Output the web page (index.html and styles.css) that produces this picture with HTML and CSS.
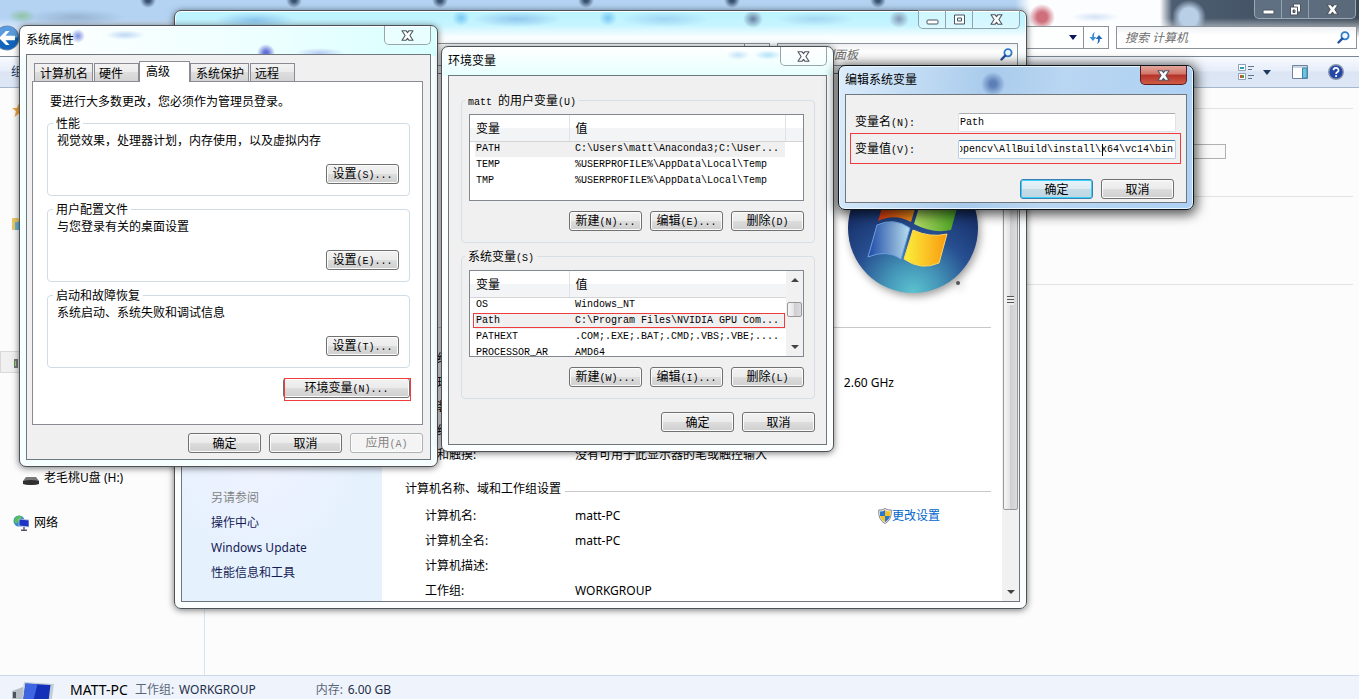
FILE: index.html
```html
<!DOCTYPE html>
<html lang="zh-CN">
<head>
  <meta charset="UTF-8">
  <meta name="viewport" content="width=device-width, initial-scale=1.0">
  <title>环境变量</title>
  <link rel="stylesheet" href="styles.css">
</head>
<body>
  <!-- Shared icons -->
  <svg class="defs" aria-hidden="true">
    <symbol id="i-close" viewBox="0 0 13 11">
      <path d="M1 .7h4l1.500 2L8 .7h4L8.900 5.500L12 10.300H8l-1.500-2L5 10.300H1l3.100-4.800z" fill="#fff" stroke="#4d5560" stroke-width="1.100" stroke-linejoin="round"/>
    </symbol>
    <symbol id="i-min" viewBox="0 0 13 11">
      <rect x="1" y="6" width="11" height="4" rx="1" fill="#fff" stroke="#4d5560"/>
    </symbol>
    <symbol id="i-max" viewBox="0 0 13 11">
      <path d="M1.500 1h10v9h-10zM4.500 4v3h4V4z" fill="#fff" fill-rule="evenodd" stroke="#4d5560"/>
    </symbol>
    <symbol id="i-restore" viewBox="0 0 13 13">
      <path d="M4.500 1h7v8h-7z" fill="#fff" stroke="#4d5560"/>
      <path d="M1.500 4h7v8h-7zM4 7v2.500h2V7z" fill="#fff" fill-rule="evenodd" stroke="#4d5560"/>
    </symbol>
    <symbol id="i-search" viewBox="0 0 13 13">
      <circle cx="8" cy="4.800" r="3.600" fill="#eef8ff" stroke="#2f7cc8" stroke-width="1.800"/>
      <path d="M5.200 7.700L1.500 11.500" stroke="#24539f" stroke-width="2.400" stroke-linecap="round"/>
    </symbol>
    <symbol id="i-refresh" viewBox="0 0 16 14">
      <path d="M7 1C4.500 2 4 4 4.200 6H1.500L5 10L8.300 6H6C6 4 6 2.500 7 1z" fill="#3a8fd6"/>
      <path d="M9 13c2.500-1 3-3 2.800-5h2.700L11 4L7.700 8H10c0 2 0 3.500-1 5z" fill="#2468b8"/>
    </symbol>
  </svg>

  <!-- Explorer window behind everything -->
  <div class="explorer">
    <div class="explorer-glass">
      <button class="back" aria-label="后退">
        <svg viewBox="0 0 26 26"><circle cx="13" cy="13" r="12.500" fill="#6f8cab"/><circle cx="13" cy="13" r="11.500" fill="#1264bd"/><path d="M2 12a11 11 0 0 1 22 0c-6 3-16 3-22 0z" fill="#5b9bdd"/><path d="M5 13l7-7h3.500L11.500 10.800H21v4.400h-9.500l4 4.800H12z" fill="#fff"/></svg>
      </button>
      <div class="address">
        <span class="arrow"></span>
        <button class="refresh" aria-label="刷新"><svg><use href="#i-refresh"/></svg></button>
      </div>
      <label class="search">
        <input type="text" placeholder="搜索 计算机" aria-label="搜索 计算机">
        <svg><use href="#i-search"/></svg>
      </label>
      <div class="controls controls-dark">
        <button aria-label="最小化"><svg><use href="#i-min"/></svg></button>
        <button aria-label="还原"><svg class="tall"><use href="#i-restore"/></svg></button>
        <button class="wide" aria-label="关闭"><svg><use href="#i-close"/></svg></button>
      </div>
    </div>
    <div class="toolbar">
      <span class="organize">组织</span>
      <button aria-label="更改视图">
        <svg viewBox="0 0 16 16"><path d="M.5.500h7v6h-7zM.5 9.500h7v6h-7z" fill="#fff" stroke="#8fa0b5"/><path d="M2 3h4v2H2z" fill="#2f9bb5"/><path d="M2 11h2v3H2z" fill="#d24b35"/><path d="M4 11h2v3H4z" fill="#4fa537"/><path d="M10 2.500h6M10 5.500h4M10 11.500h6M10 14.500h4" stroke="#61748d"/></svg>
      </button>
      <span class="arrow arrow-tool"></span>
      <button aria-label="预览窗格">
        <svg viewBox="0 0 16 16"><path d="M.5 1.500h15v13H.5z" fill="#fff" stroke="#6f839c"/><path d="M1 2h14v2H1z" fill="#c8d6e6"/><path d="M10.500 4h4.500v10h-4.500z" fill="#6ec3e0" stroke="#3d86a8"/></svg>
      </button>
      <button aria-label="帮助" class="help">
        <svg viewBox="0 0 16 16"><circle cx="8" cy="8" r="7.300" fill="#2346a8" stroke="#8d99ad" stroke-width="1.400"/><path d="M5.500 6.200a2.500 2.300 0 1 1 3.600 2.100c-.8.500-1 .9-1 1.600" fill="none" stroke="#fff" stroke-width="1.700"/><circle cx="8.100" cy="12" r="1.100" fill="#fff"/></svg>
      </button>
    </div>
    <div class="explorer-body">
      <div class="nav">
        <svg class="nav-star" viewBox="0 0 14 14"><path d="M7 0l2 5h5l-4 3.200L11.500 14L7 10.500L2.500 14L4 8.200L0 5h5z" fill="#f0a63c"/></svg>
        <svg class="nav-lib" viewBox="0 0 14 14"><path d="M0 1h6l1 2h6v10H0z" fill="#ecc964"/><path d="M3 5h10v8H3z" fill="#69b4dc"/></svg>
        <div class="nav-selected"><svg viewBox="0 0 10 12"><path d="M0 2h4v9H0z" fill="#777"/><path d="M1 4h1v5H1z" fill="#8fdc5b"/></svg></div>
        <div class="nav-item nav-drive">
          <svg viewBox="0 0 16 8"><path d="M3 0h10l3 4v3q-8 2-16 0V4z" fill="#777"/><path d="M0 4q8-2 16 0v3q-8 2-16 0z" fill="#303030"/></svg>
          <span>老毛桃U盘 (H:)</span>
        </div>
        <div class="nav-item nav-network">
          <svg viewBox="0 0 16 16"><circle cx="6" cy="6" r="5.500" fill="#2c86d6"/><path d="M2 3q4-4 7-1L6 6L3 9Q0 7 2 3z" fill="#55c05a"/><path d="M6 4l10 1v7l-10-1z" fill="#1c35c4" stroke="#c5cfdd" stroke-width=".8"/><path d="M11 12v3M8 15.300h6" stroke="#556" stroke-width="1.400"/></svg>
          <span>网络</span>
        </div>
      </div>
      <div class="drives">
        <div class="drive-group"><div class="usage"></div></div>
        <div class="drive-group"></div>
        <div class="drive-group"></div>
      </div>
    </div>
    <div class="status">
      <svg viewBox="0 0 44 34"><path d="M0 9l11-4v24H0z" fill="#b8bec6"/><path d="M1 10h3v6H1z" fill="#4a5560"/><path d="M12 0l30 2-4 27-29-4z" fill="#c3cdd8"/><path d="M13.500 1.500l25 1.500-3 24-25-3z" fill="#1430b8"/><path d="M13.500 1.500l12 .8-6 23-9-1.300z" fill="#3f66e0"/></svg>
      <span class="status-name">MATT-PC</span>
      <span class="status-key">工作组:</span><span class="status-value">WORKGROUP</span>
      <span class="status-key status-memory">内存:</span><span class="status-value">6.00 GB</span>
    </div>
  </div>

  <!-- Control panel: system -->
  <div class="window system">
    <div class="controls">
      <button aria-label="最小化"><svg><use href="#i-min"/></svg></button>
      <button aria-label="最大化"><svg><use href="#i-max"/></svg></button>
      <button class="wide" aria-label="关闭"><svg><use href="#i-close"/></svg></button>
    </div>
    <div class="system-bar">
      <div class="address"><button class="refresh" aria-label="刷新"></button></div>
      <label class="search">
        <input type="text" placeholder="搜索控制面板" aria-label="搜索控制面板">
        <svg><use href="#i-search"/></svg>
      </label>
    </div>
    <div class="client system-client">
      <div class="see-also">
        <span>另请参阅</span>
        <a href="#">操作中心</a>
        <a href="#">Windows Update</a>
        <a href="#">性能信息和工具</a>
      </div>
      <div class="system-main">
        <div class="hero">
          <svg class="orb" viewBox="0 0 132 132">
            <defs>
              <radialGradient id="orb" cx="50%" cy="100%" r="85%">
                <stop offset="0" stop-color="#5cc3d0"/><stop offset=".25" stop-color="#4496b8"/><stop offset=".55" stop-color="#274f91"/><stop offset="1" stop-color="#12265c"/>
              </radialGradient>
              <linearGradient id="red" x1="0" x2="1"><stop offset="0" stop-color="#e3380f"/><stop offset="1" stop-color="#f4a51c"/></linearGradient>
              <linearGradient id="green" x1="0" x2="1"><stop offset="0" stop-color="#b3dc66"/><stop offset="1" stop-color="#3f9a1c"/></linearGradient>
              <linearGradient id="blue" x1="0" x2="1"><stop offset="0" stop-color="#1d49a6"/><stop offset="1" stop-color="#b9dfee"/></linearGradient>
              <linearGradient id="yellow" x1="0" x2="1"><stop offset="0" stop-color="#fbf03c"/><stop offset="1" stop-color="#f99a10"/></linearGradient>
            </defs>
            <circle cx="66" cy="66" r="65" fill="url(#orb)"/>
            <path d="M40 28q17-8 33 2l-9 30q-16-9-33-1z" fill="url(#red)"/>
            <path d="M76 32q16 9 37 3l-9 33q-18 4-37-6z" fill="url(#green)"/>
            <path d="M30 63q17-8 33 3l-9 31q-14-10-33-2z" fill="url(#blue)" stroke="#6c9fe0"/>
            <path d="M66 68q17 8 34 4l-8 29q-18 8-35-4z" fill="url(#yellow)" stroke="#ffd75e"/>
            <circle cx="111" cy="121" r="2" fill="#555"/>
          </svg>
        </div>
        <div class="info">
          <div class="row"><span>分级:</span></div>
          <div class="row"><span>处理器:</span><span class="cpu">2.60 GHz</span></div>
          <div class="row"><span>安装内存</span></div>
          <div class="row"><span>系统类型</span></div>
          <div class="row"><span>笔和触摸:</span><span>没有可用于此显示器的笔或触控输入</span></div>
        </div>
        <h2>计算机名称、域和工作组设置</h2>
        <div class="info info-name">
          <div class="row"><span>计算机名:</span><span>matt-PC</span>
            <a href="#" class="change"><svg viewBox="0 0 14 16"><path d="M7 .5q3 2 6.300 1.500Q14 12 7 15.500Q0 12 .7 2Q4 2.500 7 .5z" fill="#f2f2f2" stroke="#888"/><path d="M7 2v6H2V3.500Q5 3.500 7 2zM7 8h5q-1 4-5 6z" fill="#2b77cf"/><path d="M7 2v6h5V3.500Q9 3.500 7 2zM7 8H2q1 4 5 6z" fill="#f3c321"/></svg>更改设置</a>
          </div>
          <div class="row"><span>计算机全名:</span><span>matt-PC</span></div>
          <div class="row"><span>计算机描述:</span></div>
          <div class="row"><span>工作组:</span><span>WORKGROUP</span></div>
        </div>
      </div>
      <div class="scrollbar system-scroll"><div class="thumb"></div><i class="down"></i></div>
    </div>
  </div>

  <!-- System properties dialog -->
  <div class="window dialog properties">
    <div class="titlebar"><span>系统属性</span><button class="close" aria-label="关闭"><svg><use href="#i-close"/></svg></button></div>
    <div class="client">
      <div class="tabs" role="tablist">
        <button role="tab">计算机名</button>
        <button role="tab">硬件</button>
        <button role="tab" class="active">高级</button>
        <button role="tab">系统保护</button>
        <button role="tab">远程</button>
      </div>
      <div class="tab-panel">
        <p>要进行大多数更改，您必须作为管理员登录。</p>
        <fieldset>
          <legend>性能</legend>
          <p>视觉效果，处理器计划，内存使用，以及虚拟内存</p>
          <button class="btn">设置<span class="lat">(S)...</span></button>
        </fieldset>
        <fieldset>
          <legend>用户配置文件</legend>
          <p>与您登录有关的桌面设置</p>
          <button class="btn">设置<span class="lat">(E)...</span></button>
        </fieldset>
        <fieldset>
          <legend>启动和故障恢复</legend>
          <p>系统启动、系统失败和调试信息</p>
          <button class="btn">设置<span class="lat">(T)...</span></button>
        </fieldset>
        <div class="env-mark"><button class="btn">环境变量<span class="lat">(N)...</span></button></div>
      </div>
      <div class="actions">
        <button class="btn">确定</button>
        <button class="btn">取消</button>
        <button class="btn" disabled>应用<span class="lat">(A)</span></button>
      </div>
    </div>
  </div>

  <!-- Environment variables dialog -->
  <div class="window dialog variables">
    <div class="titlebar"><span>环境变量</span><button class="close" aria-label="关闭"><svg><use href="#i-close"/></svg></button></div>
    <div class="client">
      <fieldset>
        <legend><span class="lat">matt </span>的用户变量<span class="lat">(U)</span></legend>
        <div class="list">
          <table>
            <thead><tr><th class="name">变量</th><th>值</th><th class="rest"></th></tr></thead>
            <tbody>
              <tr class="selected"><td>PATH</td><td>C:\Users\matt\Anaconda3;C:\User...</td><td></td></tr>
              <tr><td>TEMP</td><td>%USERPROFILE%\AppData\Local\Temp</td><td></td></tr>
              <tr><td>TMP</td><td>%USERPROFILE%\AppData\Local\Temp</td><td></td></tr>
            </tbody>
          </table>
        </div>
        <div class="actions">
          <button class="btn">新建<span class="lat">(N)...</span></button>
          <button class="btn">编辑<span class="lat">(E)...</span></button>
          <button class="btn">删除<span class="lat">(D)</span></button>
        </div>
      </fieldset>
      <fieldset>
        <legend>系统变量<span class="lat">(S)</span></legend>
        <div class="list">
          <table>
            <thead><tr><th class="name">变量</th><th>值</th></tr></thead>
            <tbody>
              <tr><td>OS</td><td>Windows_NT</td></tr>
              <tr class="selected marked"><td>Path</td><td>C:\Program Files\NVIDIA GPU Com...</td></tr>
              <tr><td>PATHEXT</td><td>.COM;.EXE;.BAT;.CMD;.VBS;.VBE;....</td></tr>
              <tr><td>PROCESSOR_AR</td><td>AMD64</td></tr>
            </tbody>
          </table>
          <div class="scrollbar"><i class="up"></i><div class="thumb"></div><i class="down"></i></div>
        </div>
        <div class="actions">
          <button class="btn">新建<span class="lat">(W)...</span></button>
          <button class="btn">编辑<span class="lat">(I)...</span></button>
          <button class="btn">删除<span class="lat">(L)</span></button>
        </div>
      </fieldset>
      <div class="actions">
        <button class="btn">确定</button>
        <button class="btn">取消</button>
      </div>
    </div>
  </div>

  <!-- Edit variable dialog -->
  <div class="window dialog edit">
    <div class="titlebar"><span>编辑系统变量</span><button class="close" aria-label="关闭"><svg><use href="#i-close"/></svg></button></div>
    <div class="client">
      <div class="field">
        <label for="var-name">变量名<span class="lat">(N):</span></label>
        <input type="text" id="var-name" value="Path">
      </div>
      <div class="field field-marked">
        <label for="var-value">变量值<span class="lat">(V):</span></label>
        <input type="text" id="var-value" class="focused" value="opencv\AllBuild\install\x64\vc14\bin">
        <i class="caret"></i>
      </div>
      <div class="actions">
        <button class="btn default">确定</button>
        <button class="btn">取消</button>
      </div>
    </div>
  </div>
</body>
</html>
```
FILE: styles.css
```css
* {
  box-sizing: border-box;
}

body {
  margin: 0;
  height: 100vh;
  position: relative;
  overflow: hidden;
  font-family: "Noto Sans", "Noto Sans CJK SC", sans-serif;
  font-size: 12px;
  line-height: 14px;
  color: #000;
}

button, input {
  font: inherit;
  color: inherit;
}

button {
  padding: 0;
  border: 0;
  background: none;
}

p {
  margin: 0;
}

a {
  color: #0066cc;
  text-decoration: none;
}

.defs {
  position: absolute;
  width: 0;
  height: 0;
}

/* Explorer */
.explorer {
  height: 100%;
  display: flex;
  flex-direction: column;
  background: #fcfcfc;
}

.explorer-glass {
  position: relative;
  height: 57px;
  flex: none;
  display: flex;
  justify-content: flex-end;
  padding: 26px 2px 0 0;
  border-bottom: 1px solid #7b8794;
  background:
    radial-gradient(circle at 1042px 17px, #cf6f7c 5px, transparent 13px),
    radial-gradient(circle at 1189px 17px, #b9cfe6 9px, transparent 17px),
    radial-gradient(ellipse 24px 5px at 1095px 17px, #d5e2f6, transparent),
    radial-gradient(ellipse 14px 7px at 22px 16px, #8fc3a4, transparent),
    radial-gradient(ellipse 50px 8px at 75px 17px, #98b4d2, transparent),
    radial-gradient(circle at 148px 0, #37506f 2px, transparent 8px),
    radial-gradient(circle at 294px 0, #37506f 2px, transparent 8px),
    radial-gradient(circle at 440px 0, #37506f 2px, transparent 8px),
    radial-gradient(circle at 586px 0, #37506f 2px, transparent 8px),
    radial-gradient(circle at 732px 0, #37506f 2px, transparent 8px),
    radial-gradient(circle at 878px 0, #37506f 2px, transparent 8px),
    linear-gradient(transparent 18px, #ffffff 38px),
    linear-gradient(90deg, #b4d3f3 0, #b4d3f3 1015px, #fbfdff 1030px, #fbfdff 1160px, #4d5e72 1172px, #3b4958 100%);
}

.back {
  position: absolute;
  left: -6px;
  top: 25px;
  width: 26px;
  height: 26px;
}

.address {
  display: flex;
  align-items: center;
  justify-content: flex-end;
  height: 23px;
  width: 160px;
  background: #fdffff;
  border: 1px solid #8b9299;
}

.explorer-glass .address {
  margin-right: 7px;
}

.refresh {
  width: 25px;
  height: 21px;
  border-left: 1px solid #8b9299;
  display: flex;
  align-items: center;
  justify-content: center;
}

.refresh svg {
  width: 16px;
  height: 14px;
}

.arrow {
  border: 4px solid transparent;
  border-top: 5px solid #0e1560;
  border-bottom: 0;
  margin-right: 6px;
}

.search {
  display: flex;
  align-items: center;
  width: 241px;
  height: 23px;
  padding: 0 6px 0 8px;
  background: linear-gradient(#eef0f3, #ffffff 8px);
  border: 1px solid #8b9299;
}

.search input {
  flex: 1;
  min-width: 0;
  padding: 0;
  border: 0;
  background: none;
  outline: none;
}

.search input::placeholder {
  color: #6d6d6d;
  font-style: italic;
  opacity: 1;
}

.search svg {
  width: 13px;
  height: 13px;
}

.controls {
  position: absolute;
  top: -1px;
  right: 6px;
  display: flex;
  border: 1px solid #8fa3ae;
  border-top: 0;
  border-radius: 0 0 5px 5px;
  background: rgba(255, 255, 255, .3);
}

.controls button {
  width: 27px;
  height: 18px;
  display: flex;
  align-items: center;
  justify-content: center;
  border-right: 1px solid #8fa3ae;
}

.controls .wide {
  width: 46px;
  border-right: 0;
}

.controls svg, .close svg {
  width: 13px;
  height: 11px;
}

.controls .tall {
  height: 13px;
}

.controls-dark {
  top: 0;
  right: 3px;
  border-color: #9ba8b6;
  background: rgba(150, 165, 185, .35);
}

.toolbar {
  height: 31px;
  flex: none;
  display: flex;
  align-items: center;
  justify-content: flex-end;
  padding-right: 15px;
  background: linear-gradient(#f7fafe, #e7eefa 45%, #dbe5f4 50%, #dde7f5);
  border-bottom: 1px solid #a6b6cd;
}

.organize {
  color: #1e395b;
  padding-left: 11px;
  margin-right: auto;
}

.toolbar button, .toolbar svg {
  width: 16px;
  height: 16px;
  display: block;
}

.toolbar .arrow-tool {
  border-top-color: #1e395b;
  margin: 0 21px 0 9px;
}

.toolbar .help {
  margin-left: 20px;
}

.explorer-body {
  flex: 1;
  display: flex;
  min-height: 0;
}

.nav {
  width: 205px;
  border-right: 1px solid #d6e5f5;
}

.nav-star, .nav-lib {
  display: block;
  width: 14px;
  height: 14px;
  margin: 15px 0 0 12px;
}

.nav-lib {
  margin-top: 100px;
}

.nav-selected {
  margin-top: 120px;
  height: 22px;
  padding: 5px 0 0 13px;
  background: #f0f0f0;
  border: 1px solid #d9d9d9;
}

.nav-selected svg {
  display: block;
  width: 10px;
  height: 12px;
}

.nav-item {
  display: flex;
  align-items: center;
  height: 20px;
}

.nav-item span {
  margin-left: 5px;
}

.nav-drive {
  margin: 95px 0 0 23px;
}

.nav-drive svg {
  width: 16px;
  height: 8px;
  margin-top: 6px;
}

.nav-network {
  margin: 25px 0 0 13px;
}

.nav-network svg {
  width: 16px;
  height: 16px;
}

.drives {
  flex: 1;
  padding: 20px 6px 0 16px;
}

.drive-group {
  height: 88px;
  padding-top: 35px;
  border-top: 1px solid #e2e2e2;
}

.usage {
  width: 1005px;
  height: 15px;
  border: 1px solid #b0b0b0;
  background: #fafafa;
}

.status {
  height: 24px;
  flex: none;
  display: flex;
  align-items: flex-start;
  padding: 6px 0 0 12px;
  overflow: hidden;
  line-height: 16px;
  background: #eff3fb;
  border-top: 1px solid #c9daea;
}

.status svg {
  width: 44px;
  height: 34px;
  flex: none;
}

.status-name {
  width: 65px;
  margin-left: 14px;
  font-size: 14px;
}

.status-key {
  width: 44px;
  color: #5a6779;
}

.status-value {
  color: #1e2f4a;
}

.status-memory {
  width: 32px;
  margin-left: 60px;
}

/* Window frame */
.window {
  position: absolute;
  display: flex;
  flex-direction: column;
  padding: 0 6px 6px;
  border: 1px solid #4b5358;
  border-radius: 7px;
  background: #fcffff;
  box-shadow: 0 1px 7px rgba(0, 0, 0, .55), inset 0 0 0 1px #ffffff;
}

.client {
  flex: 1;
  display: flex;
  flex-direction: column;
  min-height: 0;
  border: 1px solid #6f777c;
  background: #f0f0f0;
}

.titlebar {
  height: 28px;
  flex: none;
  display: flex;
  align-items: center;
  justify-content: space-between;
}

.close {
  align-self: flex-start;
  display: flex;
  align-items: center;
  justify-content: center;
  width: 47px;
  height: 19px;
  border: 1px solid #9aa5aa;
  border-top: 0;
  border-radius: 0 0 5px 5px;
  background: rgba(255, 255, 255, .4);
}

/* System window */
.system {
  left: 174px;
  top: 10px;
  width: 853px;
  height: 599px;
  padding: 32px 6px 6px;
  background:
    radial-gradient(ellipse 40px 8px at 80px 9px, #8cc8f0, transparent),
    radial-gradient(ellipse 9px 8px at 286px 7px, #77c8f3, transparent),
    radial-gradient(ellipse 45px 8px at 342px 8px, #92c8ee, transparent),
    radial-gradient(ellipse 9px 8px at 433px 7px, #77c8f3, transparent),
    radial-gradient(ellipse 45px 8px at 490px 8px, #a0d6f4, transparent),
    radial-gradient(ellipse 10px 9px at 578px 8px, #667fa0, transparent),
    radial-gradient(ellipse 40px 7px at 640px 8px, #a5d7f2, transparent),
    radial-gradient(ellipse 10px 9px at 724px 8px, #8298b5, transparent),
    linear-gradient(#baf4ff 0, #c5f4ff 14px, #fafeff 26px);
}

.system-bar {
  display: flex;
  flex: none;
  height: 30px;
}

.system-bar .address {
  flex: 1;
  margin-right: 7px;
}

.system-bar .search {
  padding-right: 4px;
  margin-right: 2px;
}

.system-client {
  flex-direction: row;
  background: #fff;
}

.see-also {
  width: 200px;
  flex: none;
  display: flex;
  flex-direction: column;
  justify-content: flex-end;
  padding: 0 0 16px 29px;
  line-height: 25px;
  background: radial-gradient(circle at 80px 390px, #eff3ff, #e6f1fe 100px);
}

.see-also a {
  color: #151c55;
}

.see-also span {
  color: #838383;
}

.system-main {
  flex: 1;
  padding: 0 11px 0 23px;
  overflow: hidden;
}

.hero {
  height: 254px;
  display: flex;
  justify-content: flex-end;
  align-items: flex-end;
  padding: 0 12px 33px 0;
  border-bottom: 1px solid #c8c8c8;
}

.orb {
  width: 132px;
  height: 132px;
  filter: drop-shadow(2px 3px 4px rgba(0, 0, 0, .4));
}

.info {
  padding: 19px 0 10px 20px;
}

.info .row {
  display: flex;
  line-height: 24px;
}

.row > span:first-child {
  width: 150px;
  flex: none;
}

.cpu {
  width: 319px;
  text-align: right;
}

.system-main h2 {
  display: flex;
  align-items: center;
  margin: 0;
  font-size: 12px;
  font-weight: normal;
  line-height: 24px;
}

.system-main h2::after {
  content: "";
  flex: 1;
  margin: 4px 0 0 4px;
  border-top: 1px solid #c8c8c8;
}

.info-name {
  padding-top: 2px;
}

.info-name .row {
  line-height: 25px;
}

.change {
  display: flex;
  align-items: center;
  margin: 0 51px 0 auto;
}

.change svg {
  width: 14px;
  height: 16px;
}

/* Scrollbars */
.scrollbar {
  width: 17px;
  flex: none;
  display: flex;
  flex-direction: column;
  align-items: center;
  padding: 7px 0;
  background: #f1f1f1;
}

.scrollbar .thumb {
  width: 15px;
  height: 15px;
  border: 1px solid #989898;
  border-radius: 2px;
  background: linear-gradient(90deg, #f6f6f6, #e4e4e4 45%, #cfcfd2 50%, #dcdcde);
}

.up, .down {
  border: 4px solid transparent;
}

.up {
  border-top: 0;
  border-bottom: 4px solid #444;
  margin-bottom: 20px;
}

.down {
  border-bottom: 0;
  border-top: 4px solid #444;
  margin-top: auto;
}

.system-scroll {
  padding-top: 16px;
}

.system-scroll .thumb {
  height: 420px;
  background:
    repeating-linear-gradient(#555 0 1px, #eee 1px 3px) center / 7px 9px no-repeat,
    linear-gradient(90deg, #f6f6f6, #e4e4e4 45%, #cfcfd2 50%, #dcdcde);
}

/* Dialog controls */
.dialog .client {
  font-family: "Noto Sans CJK SC", sans-serif;
}

.lat {
  font-family: "Liberation Mono", monospace;
  font-size: 10px;
  white-space: pre;
}

.btn {
  width: 73px;
  height: 20px;
  line-height: 16px;
  border: 1px solid #707070;
  border-radius: 3px;
  background: linear-gradient(#f2f2f2, #ebebeb 50%, #dddddd 50%, #cfcfcf);
  box-shadow: inset 0 0 0 1px #fcfcfc;
}

.btn:disabled {
  color: #838383;
  border-color: #adb2b5;
  background: #f4f4f4;
}

.btn.default {
  border-color: #3c7fb1;
  background: linear-gradient(#e8f3f8, #dcebf2 50%, #c5dce7 50%, #bfd7e3);
  box-shadow: inset 0 0 0 1px #35d0fb;
}

.actions {
  display: flex;
  justify-content: flex-end;
  gap: 8px;
}

fieldset {
  min-width: 0;
  margin: 0;
  border: 1px solid #d5dfe5;
  border-radius: 4px;
}

legend {
  padding: 0 3px;
  margin-left: -4px;
  height: 14px;
}

/* System properties */
.properties {
  left: 19px;
  top: 25px;
  width: 419px;
  height: 442px;
  background:
    radial-gradient(circle at 246px 27px, #6470d8 2px, transparent 9px),
    radial-gradient(ellipse 25px 5px at 300px 27px, #b7ccf5, transparent),
    radial-gradient(circle at 58px 10px, #8b9be4 1px, transparent 7px),
    radial-gradient(ellipse 20px 5px at 105px 9px, #bfd8f5, transparent),
    linear-gradient(90deg, #ffffff, #ecffff 60%, #d8ffff) 0 0 / 100% 30px no-repeat,
    #f6ffff;
}

.properties .client {
  padding: 6px 7px 6px 5px;
}

.tabs {
  display: flex;
  align-items: flex-end;
  height: 20px;
  margin-left: 2px;
}

.tabs button {
  height: 18px;
  padding: 0 4px 0 5px;
  margin-right: 1px;
  text-align: left;
  border: 1px solid #898c95;
  border-bottom: 0;
  background: linear-gradient(#f2f2f2, #ebebeb 50%, #dddddd 50%, #d3d3d3);
}

.tabs button:nth-child(2), .tabs button:last-child {
  padding: 0 15px 0 4px;
  margin-right: 0;
}

.tabs .active {
  height: 21px;
  padding: 0 19px 2px 6px;
  margin: 0 0 -1px;
  background: #fff;
  position: relative;
}

.tab-panel {
  height: 344px;
  padding: 12px 12px 0 14px;
  border: 1px solid #898c95;
  background: #fff;
}

.tab-panel > p {
  margin: 0 0 8px 3px;
}

.tab-panel fieldset {
  height: 80px;
  margin-bottom: 6px;
  padding: 3px 10px 0 9px;
  border-color: #cfdbe5;
}

.tab-panel fieldset .btn {
  display: block;
  margin: 17px 0 0 auto;
}

.env-mark {
  position: relative;
  width: 127px;
  margin: 10px 0 0 auto;
}

.env-mark .btn {
  display: block;
  width: 100%;
}

.env-mark::after {
  content: "";
  position: absolute;
  inset: 0 -1px -3px 1px;
  border: 1px solid #f03c3c;
}

.properties .client > .actions {
  margin-top: 8px;
}

/* Environment variables */
.variables {
  left: 441px;
  top: 46px;
  width: 393px;
  height: 406px;
  background:
    radial-gradient(ellipse 12px 5px at 296px 8px, #c4e3f8, transparent),
    radial-gradient(ellipse 14px 5px at 326px 8px, #b5e2f8, transparent),
    linear-gradient(#ffffff, #e6ffff) 0 0 / 100% 29px no-repeat,
    #fcffff;
}

.variables .client {
  padding: 17px 11px 0 12px;
}

.variables fieldset {
  height: 150px;
  margin-bottom: 6px;
  padding: 7px 10px 0 7px;
}

.list {
  display: flex;
  height: 87px;
  overflow: hidden;
  border: 1px solid #828790;
  background: #fff;
}

.list table {
  flex: 1;
  table-layout: fixed;
  width: 0;
  height: 0;
  border-collapse: collapse;
}

.list tr {
  height: 16px;
}

.list thead tr {
  height: 26px;
}

.list th {
  padding: 0 0 0 6px;
  font-weight: normal;
  text-align: left;
  border-right: 1px solid #dfe3e8;
  border-bottom: 1px solid #d5d5d5;
  background: linear-gradient(#ffffff 50%, #f3f4f6 50%);
}

.list th:last-child {
  border-right: 0;
}

.list .name {
  width: 99px;
}

.list .rest {
  width: 18px;
}

.list td {
  padding: 0 0 0 6px;
  height: 16px;
  font-family: "Liberation Mono", monospace;
  font-size: 10px;
  white-space: nowrap;
}

.selected td {
  background: #f0f0f0;
}

.selected td:first-child {
  background: linear-gradient(90deg, #fff 5px, #f0f0f0 5px);
}

.selected td:nth-child(3) {
  background: none;
}

.marked {
  position: relative;
}

.marked td:last-child::after {
  content: "";
  position: absolute;
  inset: 0 1px 1px 3px;
  border: 1px solid #f03c3c;
}

fieldset .actions {
  margin-top: 10px;
}

.variables .client > .actions {
  margin-top: 7px;
}

/* Edit variable */
.edit {
  left: 838px;
  top: 65px;
  width: 356px;
  height: 145px;
  border-color: #10151c;
  background:
    radial-gradient(circle at 154px 18px, #5d7fb8 3px, transparent 12px),
    linear-gradient(100deg, #dcedfc, #a9cbec 40%, #b9d6f2 60%, #add0f4);
  box-shadow: 0 2px 12px 3px rgba(0, 0, 0, .65), inset 0 0 0 1px #e8f6ff;
}

.edit .close {
  border-color: #5b1d1d;
  background: linear-gradient(#e3a79c, #d2766a 45%, #b5322a 50%, #cf5b45);
}

.edit .client {
  padding: 18px 10px 0 9px;
}

.field {
  position: relative;
  display: flex;
  align-items: center;
  height: 19px;
  margin-bottom: 8px;
}

.field label {
  width: 103px;
}

.field input {
  flex: 1;
  min-width: 0;
  height: 19px;
  padding: 0 1px;
  font-family: "Liberation Mono", monospace;
  font-size: 10px;
  background: #fff;
  border: 1px solid #e2e3ea;
  border-top-color: #abadb3;
  border-radius: 2px;
  outline: none;
}

.field .focused {
  text-indent: -3px;
  border-color: #b5cfe7;
  border-top-color: #3d7bad;
}

.caret {
  position: absolute;
  left: 247px;
  top: 4px;
  height: 12px;
  border-left: 1px solid #000;
}

.field-marked::after {
  content: "";
  position: absolute;
  inset: -7px -5px -5px;
  border: 1px solid #f03c3c;
}

.edit .actions {
  margin: 12px 2px 0 0;
}
```
